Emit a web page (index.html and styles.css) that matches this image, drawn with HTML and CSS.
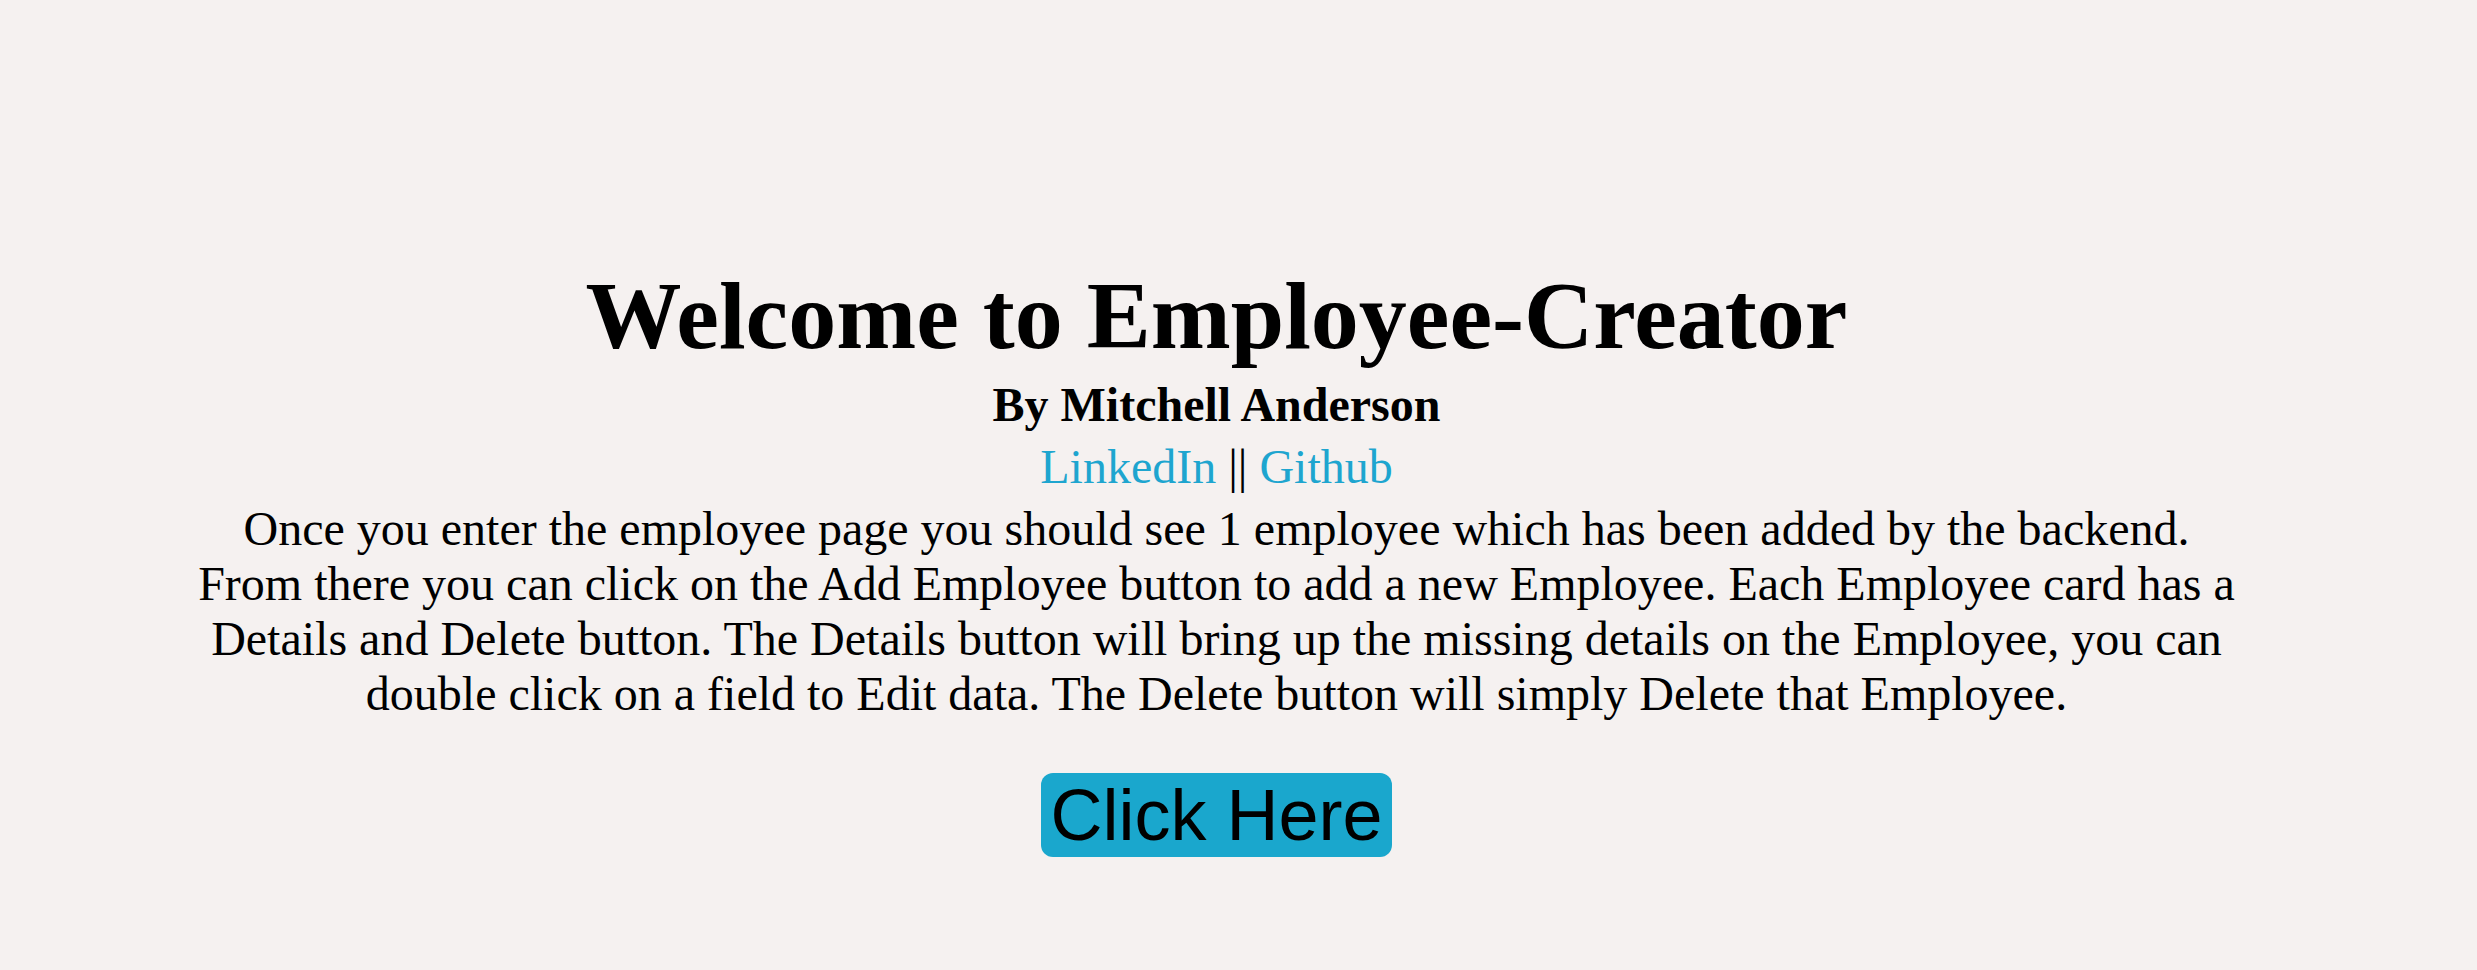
FILE: index.html
```html
<!DOCTYPE html>
<html lang="en">
<head>
<meta charset="utf-8">
<title>Employee-Creator</title>
<link rel="stylesheet" href="styles.css">
</head>
<body>
<main class="landing">
  <h1 class="landing__title">Welcome to Employee-Creator</h1>
  <h2 class="landing__byline">By Mitchell Anderson</h2>
  <div class="landing__links">
    <a class="landing__link" href="#">LinkedIn</a> || <a class="landing__link" href="#">Github</a>
  </div>
  <p class="landing__text">Once you enter the employee page you should see 1 employee which has been added by the backend. From there you can click on the Add Employee button to add a new Employee. Each Employee card has a Details and Delete button. The Details button will bring up the missing details on the Employee, you can double click on a field to Edit data. The Delete button will simply Delete that Employee.</p>
  <button class="landing__button" type="button">Click Here</button>
</main>
</body>
</html>
```
FILE: styles.css
```css
html, body {
  margin: 0;
  padding: 0;
  background: #f5f1f0;
}

body {
  font-family: "Liberation Serif", "Times New Roman", serif;
  color: #000;
}

.landing {
  display: flex;
  flex-direction: column;
  align-items: center;
  text-align: center;
  padding: 260px 44px 0 0;
}

.landing__title {
  margin: 0;
  font-size: 96px;
  font-weight: 700;
  line-height: normal;
}

.landing__byline {
  margin: 6px 0 0;
  font-size: 48px;
  font-weight: 700;
  line-height: normal;
}

.landing__links {
  margin-top: 7px;
  font-size: 48px;
  line-height: normal;
}

.landing__link {
  color: #1ea5cf;
  text-decoration: none;
}

.landing__text {
  margin: 7px 0 0;
  max-width: 2060px;
  font-size: 48px;
  line-height: normal;
}

.landing__button {
  margin-top: 52px;
  height: 84px;
  padding: 0 9px;
  border: none;
  border-radius: 12px;
  background: #1aa7cd;
  color: #000;
  font-family: "Liberation Sans", Arial, sans-serif;
  font-size: 72px;
  line-height: 84px;
  cursor: pointer;
}
```
